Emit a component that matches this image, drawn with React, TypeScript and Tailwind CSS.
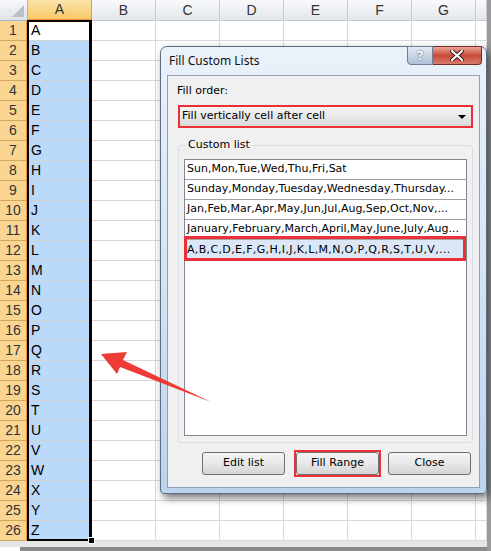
import React from 'react'

const COLS = ['A', 'B', 'C', 'D', 'E', 'F', 'G', '']
const ROWS = Array.from({ length: 26 }, (_, i) => i + 1)
const LETTERS = 'ABCDEFGHIJKLMNOPQRSTUVWXYZ'.split('')

const LISTS = [
  'Sun,Mon,Tue,Wed,Thu,Fri,Sat',
  'Sunday,Monday,Tuesday,Wednesday,Thursday...',
  'Jan,Feb,Mar,Apr,May,Jun,Jul,Aug,Sep,Oct,Nov,...',
  'January,February,March,April,May,June,July,Aug...',
  'A,B,C,D,E,F,G,H,I,J,K,L,M,N,O,P,Q,R,S,T,U,V,...',
]

const uiFont = "font-['DejaVu_Sans',sans-serif]"

function Sheet() {
  return (
    <div className="grid grid-cols-[28px_64px_64px_64px_64px_64px_64px_64px_11px] grid-rows-[21px_repeat(26,20px)]">
      {/* corner */}
      <div className="relative border-r border-b border-[#9eb6ce] bg-gradient-to-b from-[#f7f8fa] to-[#dfe3e8]">
        <div className="absolute right-[3px] bottom-[3px] w-0 h-0 border-l-[12px] border-l-transparent border-b-[12px] border-b-[#b9c0c8]" />
      </div>
      {COLS.map((c, i) => (
        <div
          key={'h' + i}
          className={
            c === 'A'
              ? 'flex items-center justify-center border-r border-b-2 border-r-[#c9a55b] border-b-[#f29436] bg-gradient-to-b from-[#fbe3a8] to-[#f6c966] text-[14px] text-[#333]'
              : 'flex items-center justify-center border-r border-b border-[#c5cbd2] bg-gradient-to-b from-[#f8f9fb] to-[#e3e7ec] text-[14px] text-[#333]'
          }
        >
          {c}
        </div>
      ))}
      {ROWS.map((r) => (
        <React.Fragment key={r}>
          <div className="flex items-center justify-center border-r-2 border-b border-r-[#f29436] border-b-[#d1a95c] bg-[#f9d591] text-[14px] text-[#333]">
            {r}
          </div>
          <div
            className={
              'flex items-end pb-[1px] pl-[3px] border-r border-b border-[#d4d4d4] text-[14px] leading-[17px] text-black ' +
              (r === 1 ? 'bg-white' : 'bg-[#bbd9f9]')
            }
          >
            {LETTERS[r - 1]}
          </div>
          {[0, 1, 2, 3, 4, 5, 6].map((k) => (
            <div key={k} className="border-r border-b border-[#d9d9d9] bg-white" />
          ))}
        </React.Fragment>
      ))}
    </div>
  )
}

function Button({ label }: { label: string }) {
  return (
    <div className="flex h-[23px] w-[83px] items-center justify-center rounded-[3px] border border-[#707070] bg-gradient-to-b from-[#f4f4f4] via-[#e8e8e8] to-[#d4d4d4] text-[11px] text-black">
      {label}
    </div>
  )
}

function Dialog() {
  return (
    <div className="absolute left-[160px] top-[46px] flex h-[448px] w-[327px] flex-col rounded-t-[7px] rounded-b-[4px] border border-[#5b6d80] bg-gradient-to-b from-[#eaf1f9] via-[#d6e4f3] to-[#bcd3ee] shadow-[3px_4px_8px_rgba(0,0,0,0.55)]">
      <div className="relative flex h-[28px] items-center pl-[8px] font-['Noto_Sans',sans-serif] text-[12px] text-[#111]">
        Fill Custom Lists
        <div className="absolute right-[4px] top-[-1px] flex h-[19px]">
          <div className="flex w-[26px] items-center justify-center rounded-bl-[4px] border border-[#6d7f93] bg-gradient-to-b from-[#e4ecf5] via-[#c9d6e6] to-[#b0c2d8] text-[13px] font-bold text-white [text-shadow:0_0_2px_#2a3a4f]">
            ?
          </div>
          <div className="flex w-[49px] items-center justify-center rounded-br-[4px] border border-l-0 border-[#7a2a22] bg-gradient-to-b from-[#e9a597] via-[#c74a3a] to-[#d67a6c]">
            <svg width="14" height="11" viewBox="0 0 14 11">
              <path d="M2 1 L12 10 M12 1 L2 10" stroke="#3d1410" strokeWidth="4" strokeLinecap="round" />
              <path d="M2 1 L12 10 M12 1 L2 10" stroke="#ffffff" strokeWidth="2.2" strokeLinecap="round" />
            </svg>
          </div>
        </div>
      </div>
      <div className={'mx-[6px] mb-[5px] flex flex-1 flex-col border border-[#8da2bb] bg-[#f0f0f0] ' + uiFont}>
        <div className="pl-[9px] pt-[8px] text-[11px] leading-[14px] text-black">Fill order:</div>
        <div className="ml-[10px] mt-[7px] h-[23px] w-[295px] border-2 border-[#ec3038]">
          <div className="flex h-full items-center justify-between bg-gradient-to-b from-[#f4f4f4] via-[#e9e9e9] to-[#d8d8d8] pl-[2px] pr-[5px] text-[11px] text-black">
            <span>Fill vertically cell after cell</span>
            <span className="h-0 w-0 border-x-[4px] border-t-[4px] border-x-transparent border-t-black" />
          </div>
        </div>
        <div className="relative ml-[10px] mt-[17px] h-[298px] w-[295px] rounded-[3px] border border-[#d5dfe5] pt-[13px] pl-[5px]">
          <span className="absolute left-[6px] top-[-8px] bg-[#f0f0f0] px-[3px] text-[11px] leading-[14px] text-black">
            Custom list
          </span>
          <div className="h-[277px] w-[283px] border border-[#828790] bg-white">
            {LISTS.map((t, i) => (
              <div
                key={i}
                className={
                  'relative flex h-[20px] items-center pl-[2px] text-[11px] text-black whitespace-nowrap ' +
                  (i === 4 ? 'bg-[#dbe7f7] tracking-[0.35px]' : 'border-b border-[#a3a3a3]')
                }
              >
                {t}
                {i === 4 && (
                  <span className="absolute -left-[1px] -top-[4px] -bottom-[1px] right-0 border-[3px] border-[#ec3038]" />
                )}
              </div>
            ))}
          </div>
        </div>
        <div className="mt-[6px] flex h-[28px] items-center justify-end gap-[7px] pr-[8px]">
          <div className="mr-[2px]">
            <Button label="Edit list" />
          </div>
          <div className="border-2 border-[#ec3038]">
            <Button label="Fill Range" />
          </div>
          <Button label="Close" />
        </div>
      </div>
    </div>
  )
}

export default function App() {
  return (
    <div className="relative h-[551px] w-[491px] overflow-hidden bg-white font-['Liberation_Sans',sans-serif]">
      <div className="flex">
        <div className="flex flex-col">
          <Sheet />
          <div className="h-[6px] bg-[#e6e6e6]" />
          <div className="ml-[20px] h-[4px] bg-[#8a8a8a]" />
        </div>
        <div className="w-[4px] bg-[#9a9a9a]" />
      </div>

      {/* selection outline */}
      <div className="absolute left-[27px] top-[20px] h-[521px] w-[65px] border-2 border-r-[3px] border-black" />
      <div className="absolute left-[88px] top-[537px] h-[7px] w-[7px] border border-white bg-black" />

      <Dialog />

      <svg className="absolute left-0 top-0" width="491" height="551" viewBox="0 0 491 551">
        <polygon points="101,354 127,352 123,360 211,402 120,367 117,374" fill="#ee3b36" />
      </svg>
    </div>
  )
}
